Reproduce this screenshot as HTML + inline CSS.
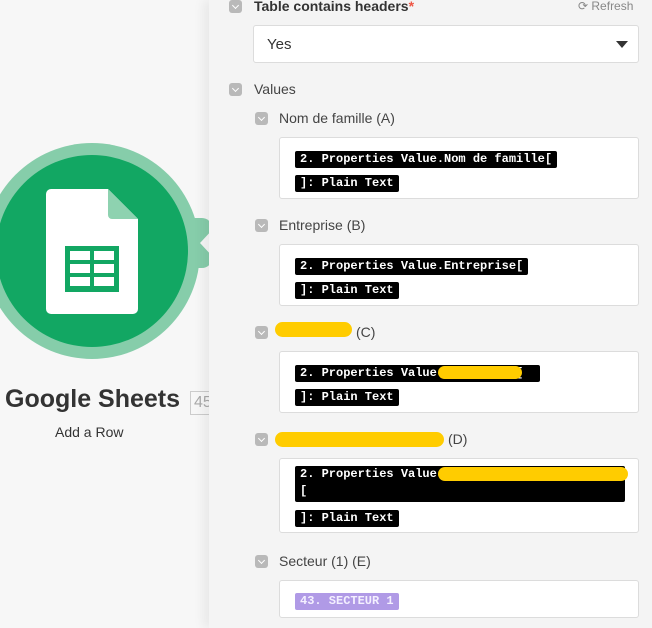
<!DOCTYPE html>
<html><head><meta charset="utf-8"><style>
body{margin:0;width:652px;height:628px;overflow:hidden;background:#f7f7f7;font-family:"Liberation Sans",sans-serif;position:relative}
.a{position:absolute}
.panel{left:209px;top:0;width:443px;height:628px;background:#f4f4f4;box-shadow:-6px 0 10px rgba(0,0,0,.06)}
.cb{position:absolute;width:13px;height:13px;background:#b9b9b9;border-radius:3px}
.cb:after{content:"";position:absolute;left:4px;top:3px;width:4px;height:4px;border-right:1.6px solid #fff;border-bottom:1.6px solid #fff;transform:rotate(45deg)}
.lbl{position:absolute;font-size:14px;color:#444}
.box{position:absolute;left:279px;width:358px;background:#fff;border:1px solid #dcdcdc;border-radius:3px}
.pill{position:absolute;left:15px;background:#000;color:#fff;font-family:"Liberation Mono",monospace;font-size:12px;font-weight:bold;height:17px;line-height:17px;padding:0 5px;border-radius:2px;white-space:pre}
.y{position:absolute;background:#ffcc00;border-radius:8px}
</style></head><body>
<div class="a" style="left:-16px;top:143px;width:216px;height:216px;border-radius:50%;background:#86cdaa"></div>
<div class="a" style="left:190px;top:218px;width:22px;height:50px;background:#86cdaa;border-radius:0 10px 10px 0"></div>
<div class="a" style="left:200px;top:228px;width:14px;height:30px;background:#f7f7f7;clip-path:polygon(100% 0,0 50%,100% 100%)"></div>
<div class="a" style="left:-4px;top:155px;width:192px;height:192px;border-radius:50%;background:#12a763"></div>
<svg class="a" style="left:46px;top:189px" width="93" height="125" viewBox="0 0 93 125">
<path d="M5 0H62L92 30V120a5 5 0 0 1-5 5H5a5 5 0 0 1-5-5V5a5 5 0 0 1 5-5z" fill="#fff"/>
<path d="M62 0L92 30H66a4 4 0 0 1-4-4z" fill="#8ed2b0"/>
<rect x="19" y="57" width="54" height="46" fill="#12a763"/>
<g fill="#fff"><rect x="24" y="62" width="20" height="9"/><rect x="48" y="62" width="20" height="9"/><rect x="24" y="75" width="20" height="9"/><rect x="48" y="75" width="20" height="9"/><rect x="24" y="88" width="20" height="9"/><rect x="48" y="88" width="20" height="9"/></g>
</svg>
<div class="a" style="left:5px;top:385px;font-size:25px;font-weight:bold;color:#333">Google Sheets</div>
<div class="a" style="left:190px;top:391px;width:22px;height:22px;border:1px solid #ccc;font-size:16px;color:#aaa;line-height:22px;padding-left:3px">45</div>
<div class="a" style="left:55px;top:424px;font-size:14px;color:#333">Add a Row</div>
<div class="a panel"></div>
<div class="cb" style="left:229px;top:0px"></div>
<div class="lbl" style="left:254px;top:-2px;font-weight:bold;color:#333">Table contains headers<span style="color:#e54">*</span></div>
<div class="a" style="left:578px;top:-1px;font-size:12px;color:#888">⟳ Refresh</div>
<div class="a" style="left:253px;top:25px;width:384px;height:36px;background:#fff;border:1px solid #dcdcdc;border-radius:3px"><span class="a" style="left:13px;top:10px;font-size:15px;color:#333">Yes</span><span class="a" style="left:362px;top:15px;border:6px solid transparent;border-top:7px solid #333;border-bottom:0"></span></div>
<div class="cb" style="left:229px;top:83px"></div><div class="lbl" style="left:254px;top:81px">Values</div>
<div class="cb" style="left:255px;top:112px"></div><div class="lbl" style="left:279px;top:110px">Nom de famille (A)</div>
<div class="box" style="top:137px;height:60px"><div class="pill" style="top:13px">2. Properties Value.Nom de famille[</div><div class="pill" style="top:37px">]: Plain Text</div></div>
<div class="cb" style="left:255px;top:219px"></div><div class="lbl" style="left:279px;top:217px">Entreprise (B)</div>
<div class="box" style="top:244px;height:60px"><div class="pill" style="top:13px">2. Properties Value.Entreprise[</div><div class="pill" style="top:37px">]: Plain Text</div></div>
<div class="cb" style="left:255px;top:326px"></div><div class="y" style="left:275px;top:322px;width:77px;height:15px"></div><div class="lbl" style="left:356px;top:324px">(C)</div>
<div class="box" style="top:351px;height:60px"><div class="pill" style="top:13px;width:235px">2. Properties Value           [</div><div class="pill" style="top:37px">]: Plain Text</div><div class="y" style="left:158px;top:14px;width:84px;height:13px"></div></div>
<div class="cb" style="left:255px;top:433px"></div><div class="y" style="left:275px;top:432px;width:169px;height:15px"></div><div class="lbl" style="left:448px;top:431px">(D)</div>
<div class="box" style="top:458px;height:73px"><div class="pill" style="top:7px;width:320px;height:36px;line-height:17px">2. Properties Value
[</div><div class="pill" style="top:51px">]: Plain Text</div><div class="y" style="left:158px;top:8px;width:190px;height:14px"></div></div>
<div class="cb" style="left:255px;top:555px"></div><div class="lbl" style="left:279px;top:553px">Secteur (1) (E)</div>
<div class="box" style="top:580px;height:36px"><div class="pill" style="top:12px;background:#b09ae6;color:#f4f0ff">43. SECTEUR 1</div></div>
</body></html>
